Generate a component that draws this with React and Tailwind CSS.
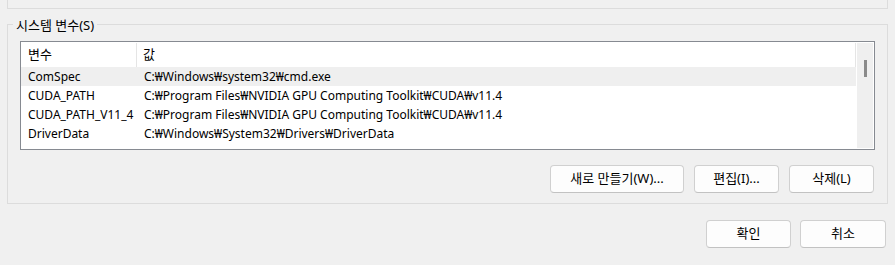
import React from "react";

const font = { fontFamily: '"Segoe UI", "Noto Sans", "Noto Sans CJK KR", sans-serif' };

const rows = [
  ["ComSpec", "C:₩Windows₩system32₩cmd.exe", true],
  ["CUDA_PATH", "C:₩Program Files₩NVIDIA GPU Computing Toolkit₩CUDA₩v11.4", false],
  ["CUDA_PATH_V11_4", "C:₩Program Files₩NVIDIA GPU Computing Toolkit₩CUDA₩v11.4", false],
  ["DriverData", "C:₩Windows₩System32₩Drivers₩DriverData", false],
];

function Btn({ children, w }) {
  return (
    <button
      className={`${w} h-[28px] rounded-[4px] border border-[#d0d0d0] border-b-[#c2c2c2] bg-[#fdfdfd] text-[13px] text-black flex items-center justify-center`}
    >
      {children}
    </button>
  );
}

export default function App() {
  return (
    <div
      className="w-[895px] h-[265px] bg-[#f0f0f0] overflow-hidden text-[12px] text-black"
      style={font}
    >
      <div className="ml-[7px] w-[881px] h-[9px] border border-t-0 border-[#dcdcdc]" />
      <div className="ml-[7px] mt-[15px] w-[881px] h-[180px] border border-[#dcdcdc] flex flex-col">
        <div className="h-0 flex">
          <span className="-mt-[9px] ml-[5px] px-[3px] h-[18px] leading-[18px] bg-[#f0f0f0] text-[13px]">
            시스템 변수(S)
          </span>
        </div>
        <div className="mt-[16px] ml-[12px] w-[855px] h-[109px] border border-[#868a91] bg-white flex">
          <div className="flex-1 flex flex-col">
            <div className="h-[25px] flex border-t border-white text-[13px]">
              <div className="w-[116px] pl-[7px] border-r border-[#e5e5e5] flex items-center">변수</div>
              <div className="flex-1 pl-[6px] border-r border-[#e5e5e5] flex items-center">값</div>
            </div>
            {rows.map(([k, v, sel]) => (
              <div key={k} className={`h-[19px] flex items-center ${sel ? "bg-[#efefef]" : ""}`}>
                <div className="w-[117px] pl-[7px] whitespace-nowrap">{k}</div>
                <div className="pl-[6px] whitespace-nowrap">{v}</div>
              </div>
            ))}
          </div>
          <div className="w-[18px] border border-white bg-[#efefef] flex justify-center">
            <div className="mt-[17px] ml-[1px] w-[3px] h-[17px] bg-[#8a8a8a]" />
          </div>
        </div>
        <div className="mt-[15px] mr-[13px] flex justify-end gap-[10px]">
          <Btn w="w-[134px]">새로 만들기(W)...</Btn>
          <Btn w="w-[85px]">편집(I)...</Btn>
          <Btn w="w-[85px]">삭제(L)</Btn>
        </div>
      </div>
      <div className="mt-[16px] mr-[9px] flex justify-end gap-[9px]">
        <Btn w="w-[85px]">확인</Btn>
        <Btn w="w-[86px]">취소</Btn>
      </div>
    </div>
  );
}
